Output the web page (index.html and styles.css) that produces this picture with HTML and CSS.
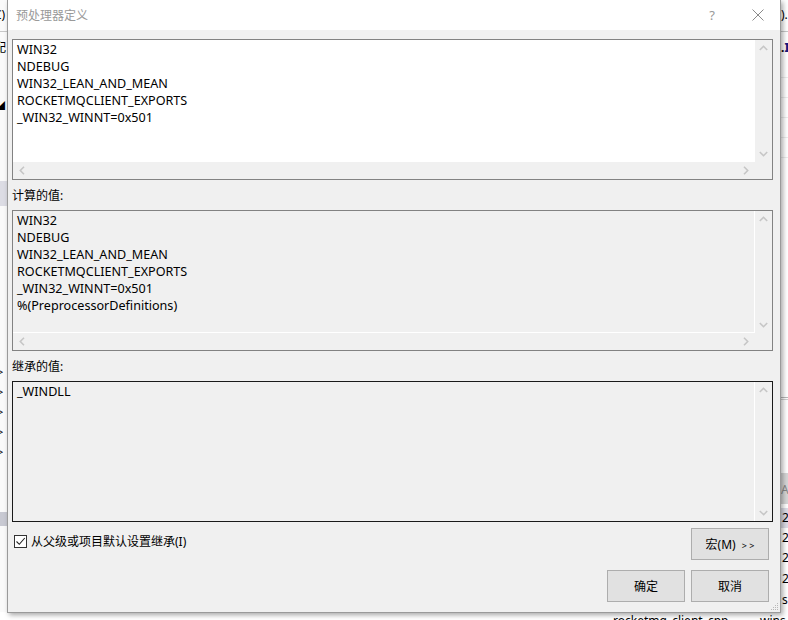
FILE: index.html
```html
<!DOCTYPE html>
<html lang="zh-CN">
<head>
<meta charset="utf-8">
<title>预处理器定义</title>
<link rel="stylesheet" href="styles.css">
</head>
<body>
<div class="desktop">
  <div class="behind behind-left">
    <span class="frag frag-c">C)</span>
    <div class="bl-line"></div>
    <span class="frag frag-pei">配</span>
    <span class="frag frag-tri">◢</span>
    <div class="bl-sel"></div>
    <span class="frag frag-arr a1">&gt;</span>
    <span class="frag frag-arr a2">&gt;</span>
    <span class="frag frag-arr a3">&gt;</span>
    <span class="frag frag-arr a4">&gt;</span>
    <span class="frag frag-arr a5">&gt;</span>
    <div class="bl-band"></div>
  </div>
  <div class="behind behind-right">
    <span class="frag frag-dot">).</span>
    <div class="br-line"></div>
    <span class="frag frag-ii">.<b class="c1">I</b><b class="c2">I</b></span>
    <div class="br-rule r1"></div>
    <div class="br-rule r2"></div>
    <div class="br-rule r3"></div>
    <div class="br-rule r4"></div>
    <div class="br-rule r5"></div>
    <div class="br-double"></div>
    <div class="br-band"><span>A)</span></div>
    <div class="br-sel"></div>
    <span class="frag frag-2c t1">2c</span>
    <span class="frag frag-2c t2">2c</span>
    <span class="frag frag-2c t3">2c</span>
    <span class="frag frag-2c t4">2c</span>
    <span class="frag frag-2c t5">s</span>
  </div>
  <div class="behind-bottom">
    <span class="bb-a">rocketmq_client_cpp</span>
    <span class="bb-b">wins</span>
  </div>

  <div class="dialog">
    <div class="titlebar">
      <span class="title">预处理器定义</span>
      <span class="help">?</span>
      <svg class="close" width="12" height="12" viewBox="0 0 12 12"><path d="M0.5 0.5 L11.5 11.5 M11.5 0.5 L0.5 11.5" stroke="#8a8a8a" stroke-width="1" fill="none"/></svg>
    </div>
    <div class="body">
      <div class="textbox editable">
        <div class="content">
          <div>WIN32</div>
          <div>NDEBUG</div>
          <div>WIN32_LEAN_AND_MEAN</div>
          <div>ROCKETMQCLIENT_EXPORTS</div>
          <div>_WIN32_WINNT=0x501</div>
        </div>
        <div class="vscroll">
          <svg class="arrow" width="9" height="6" viewBox="0 0 9 6"><path d="M0.8 5 L4.5 1.3 L8.2 5" stroke="#c6c6c6" stroke-width="1.6" fill="none"/></svg>
          <svg class="arrow" width="9" height="6" viewBox="0 0 9 6"><path d="M0.8 1 L4.5 4.7 L8.2 1" stroke="#c6c6c6" stroke-width="1.6" fill="none"/></svg>
        </div>
        <div class="hscroll">
          <svg class="arrow" width="6" height="9" viewBox="0 0 6 9"><path d="M5 0.8 L1.3 4.5 L5 8.2" stroke="#c6c6c6" stroke-width="1.6" fill="none"/></svg>
          <svg class="arrow" width="6" height="9" viewBox="0 0 6 9"><path d="M1 0.8 L4.7 4.5 L1 8.2" stroke="#c6c6c6" stroke-width="1.6" fill="none"/></svg>
        </div>
        <div class="corner"></div>
      </div>

      <div class="label">计算的值:</div>
      <div class="textbox readonly">
        <div class="content">
          <div>WIN32</div>
          <div>NDEBUG</div>
          <div>WIN32_LEAN_AND_MEAN</div>
          <div>ROCKETMQCLIENT_EXPORTS</div>
          <div>_WIN32_WINNT=0x501</div>
          <div>%(PreprocessorDefinitions)</div>
        </div>
        <div class="vscroll">
          <svg class="arrow" width="9" height="6" viewBox="0 0 9 6"><path d="M0.8 5 L4.5 1.3 L8.2 5" stroke="#c6c6c6" stroke-width="1.6" fill="none"/></svg>
          <svg class="arrow" width="9" height="6" viewBox="0 0 9 6"><path d="M0.8 1 L4.5 4.7 L8.2 1" stroke="#c6c6c6" stroke-width="1.6" fill="none"/></svg>
        </div>
        <div class="hscroll">
          <svg class="arrow" width="6" height="9" viewBox="0 0 6 9"><path d="M5 0.8 L1.3 4.5 L5 8.2" stroke="#c6c6c6" stroke-width="1.6" fill="none"/></svg>
          <svg class="arrow" width="6" height="9" viewBox="0 0 6 9"><path d="M1 0.8 L4.7 4.5 L1 8.2" stroke="#c6c6c6" stroke-width="1.6" fill="none"/></svg>
        </div>
        <div class="corner"></div>
      </div>

      <div class="label">继承的值:</div>
      <div class="textbox readonly focused">
        <div class="content">
          <div>_WINDLL</div>
        </div>
        <div class="vscroll">
          <svg class="arrow" width="9" height="6" viewBox="0 0 9 6"><path d="M0.8 5 L4.5 1.3 L8.2 5" stroke="#c6c6c6" stroke-width="1.6" fill="none"/></svg>
          <svg class="arrow" width="9" height="6" viewBox="0 0 9 6"><path d="M0.8 1 L4.7 4.7 L8.2 1" stroke="#c6c6c6" stroke-width="1.6" fill="none"/></svg>
        </div>
      </div>

      <div class="row-options">
        <label class="check">
          <span class="box"><svg width="11" height="11" viewBox="0 0 11 11"><path d="M1.5 5.5 L4.3 8.3 L9.8 2" stroke="#222" stroke-width="1.1" fill="none"/></svg></span>
          <span>从父级或项目默认设置继承(I)</span>
        </label>
        <button class="btn">宏(M) <span class="gt">&gt; &gt;</span></button>
      </div>
      <div class="row-actions">
        <button class="btn">确定</button>
        <button class="btn">取消</button>
      </div>
    </div>
    <svg class="grip" width="8" height="8" viewBox="0 0 8 8">
      <rect x="6" y="0" width="1" height="1" fill="#b8b8b8"/>
      <rect x="4" y="2" width="1" height="1" fill="#b8b8b8"/><rect x="6" y="2" width="1" height="1" fill="#b8b8b8"/>
      <rect x="2" y="4" width="1" height="1" fill="#b8b8b8"/><rect x="4" y="4" width="1" height="1" fill="#b8b8b8"/><rect x="6" y="4" width="1" height="1" fill="#b8b8b8"/>
      <rect x="0" y="6" width="1" height="1" fill="#b8b8b8"/><rect x="2" y="6" width="1" height="1" fill="#b8b8b8"/><rect x="4" y="6" width="1" height="1" fill="#b8b8b8"/><rect x="6" y="6" width="1" height="1" fill="#b8b8b8"/>
    </svg>
  </div>
</div>
</body>
</html>
```

FILE: styles.css
```css
* { box-sizing: border-box; }
html, body { margin: 0; padding: 0; }
body {
  width: 788px;
  height: 620px;
  overflow: hidden;
  background: #ffffff;
  font-family: "Noto Sans", "Noto Sans CJK SC", sans-serif;
  font-size: 12px;
  color: #000;
}
.desktop { position: relative; width: 788px; height: 620px; overflow: hidden; }

/* background windows peeking out */
.behind { position: absolute; top: 0; height: 620px; background: #fff; overflow: hidden; }
.behind-left { left: 0; width: 8px; background: #fafafa; }
.behind-right { left: 780px; width: 8px; }
.frag { position: absolute; white-space: nowrap; line-height: 16px; }
.frag-c { left: -6px; top: 7px; }
.bl-line { position: absolute; left: 0; top: 31px; width: 8px; height: 1px; background: #c8c8c8; }
.frag-pei { left: -6px; top: 40px; }
.frag-tri { left: -4px; top: 98px; font-size: 9px; }
.bl-sel { position: absolute; left: 0; top: 181px; width: 8px; height: 25px; background: #dcdce4; }
.frag-arr { left: -3px; font-size: 11px; }
.a1 { top: 364px; } .a2 { top: 384px; } .a3 { top: 404px; } .a4 { top: 424px; } .a5 { top: 444px; }
.bl-band { position: absolute; left: 0; top: 512px; width: 8px; height: 14px; background: #c8c9d2; }

.frag-dot { left: 1px; top: 7px; }
.br-line { position: absolute; left: 0; top: 31px; width: 8px; height: 1px; background: #c8c8c8; }
.frag-ii { left: 1px; top: 40px; font-weight: bold; }
.frag-ii .c1 { color: #1a1a80; }
.frag-ii .c2 { color: #b02020; }
.br-rule { position: absolute; left: 0; width: 8px; height: 1px; background: #ececec; }
.r1 { top: 77px; } .r2 { top: 97px; } .r3 { top: 117px; } .r4 { top: 137px; } .r5 { top: 157px; }
.br-double { position: absolute; left: 0; top: 397px; width: 8px; height: 3px; border-top: 1px solid #b8b8b8; border-bottom: 1px solid #d0d0d0; }
.br-band { position: absolute; left: 0; top: 473px; width: 8px; height: 31px; background: #d6d6d6; color: #888; }
.br-band span { position: absolute; left: 1px; top: 8px; }
.br-sel { position: absolute; left: 0; top: 508px; width: 8px; height: 20px; background: #dcdce6; }
.frag-2c { left: 2px; }
.t1 { top: 510px; } .t2 { top: 530px; } .t3 { top: 550px; } .t4 { top: 571px; } .t5 { top: 592px; }

.behind-bottom { position: absolute; left: 0; top: 612px; width: 788px; height: 8px; background: #fff; overflow: hidden; }
.bb-a { position: absolute; left: 613px; top: 2px; line-height: 14px; }
.bb-b { position: absolute; left: 760px; top: 2px; line-height: 14px; }

/* dialog window */
.dialog {
  position: absolute;
  left: 7px;
  top: 0;
  width: 774px;
  height: 613px;
  background: #f0f0f0;
  border: 1px solid #9a9a9a;
  border-top: none;
  box-shadow: 2px 2px 5px rgba(0, 0, 0, 0.35);
  display: flex;
  flex-direction: column;
}
.titlebar {
  height: 30px;
  background: #fff;
  display: flex;
  align-items: center;
  padding-left: 8px;
  flex: none;
}
.title { color: #999; font-size: 12px; flex: 1; }
.help { color: #999; font-size: 13px; margin-right: 37px; }
.close { margin-right: 16px; }

.body {
  padding: 9px 7px 0 4px;
  display: flex;
  flex-direction: column;
}

.textbox {
  height: 141px;
  border: 1px solid #828282;
  display: grid;
  grid-template-columns: 1fr 17px;
  grid-template-rows: 1fr 17px;
  background: #f0f0f0;
}
.textbox.focused {
  border-color: #1a1a1a;
  grid-template-rows: 1fr;
}
.content {
  padding: 1px 4px 0;
  line-height: 17px;
  font-size: 12.6px;
  overflow: hidden;
  white-space: nowrap;
}
.editable .content { background: #fff; }
.readonly .content { background: #f0f0f0; border-right: 1px solid #fff; border-bottom: 1px solid #fff; }
.readonly.focused .content { border-bottom: none; }
.vscroll {
  display: flex;
  flex-direction: column;
  justify-content: space-between;
  align-items: center;
  padding: 5px 0 5px;
  background: #f0f0f0;
}
.hscroll {
  display: flex;
  justify-content: space-between;
  align-items: center;
  padding: 0 6px 0 6px;
  background: #f0f0f0;
}
.corner { background: #f0f0f0; }
.arrow { display: block; }

.label {
  height: 30px;
  padding-top: 7px;
  line-height: 17px;
}

.row-options {
  margin-top: 6px;
  display: flex;
  justify-content: space-between;
  align-items: flex-start;
  padding-right: 4px;
}
.check {
  display: flex;
  align-items: center;
  gap: 4px;
  margin-top: 4px;
  padding-left: 2px;
}
.box {
  width: 13px;
  height: 13px;
  border: 1px solid #333;
  background: #fff;
  display: flex;
  align-items: center;
  justify-content: center;
}
.box svg { display: block; }

.btn {
  width: 78px;
  height: 32px;
  background: #e1e1e1;
  border: 1px solid #adadad;
  font-family: "Noto Sans", "Noto Sans CJK SC", sans-serif;
  font-size: 12px;
  color: #000;
  padding: 0;
}
.gt { font-size: 9px; margin-left: 3px; }

.row-actions {
  margin-top: 10px;
  display: flex;
  justify-content: flex-end;
  gap: 6px;
  padding-right: 4px;
}

.grip { position: absolute; right: 1px; bottom: 1px; }
```
